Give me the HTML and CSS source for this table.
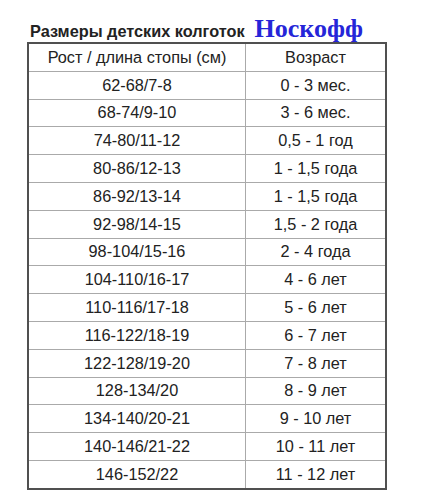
FILE: index.html
```html
<!DOCTYPE html>
<html lang="ru">
<head>
<meta charset="utf-8">
<link rel="stylesheet" href="styles.css">
</head>
<body>
<div class="page">
  <div class="title">
    <span class="caption">Размеры детских колготок</span>
    <span class="brand">Носкофф</span>
  </div>
  <table class="sizes">
    <thead>
      <tr><th class="c1">Рост / длина стопы (см)</th><th class="c2">Возраст</th></tr>
    </thead>
    <tbody>
      <tr><td>62-68/7-8</td><td>0 - 3 мес.</td></tr>
      <tr><td>68-74/9-10</td><td>3 - 6 мес.</td></tr>
      <tr><td>74-80/11-12</td><td>0,5 - 1 год</td></tr>
      <tr><td>80-86/12-13</td><td>1 - 1,5 года</td></tr>
      <tr><td>86-92/13-14</td><td>1 - 1,5 года</td></tr>
      <tr><td>92-98/14-15</td><td>1,5 - 2 года</td></tr>
      <tr><td>98-104/15-16</td><td>2 - 4 года</td></tr>
      <tr><td>104-110/16-17</td><td>4 - 6 лет</td></tr>
      <tr><td>110-116/17-18</td><td>5 - 6 лет</td></tr>
      <tr><td>116-122/18-19</td><td>6 - 7 лет</td></tr>
      <tr><td>122-128/19-20</td><td>7 - 8 лет</td></tr>
      <tr><td>128-134/20</td><td>8 - 9 лет</td></tr>
      <tr><td>134-140/20-21</td><td>9 - 10 лет</td></tr>
      <tr><td>140-146/21-22</td><td>10 - 11 лет</td></tr>
      <tr><td>146-152/22</td><td>11 - 12 лет</td></tr>
    </tbody>
  </table>
</div>
</body>
</html>
```
FILE: styles.css
```css
html, body {
  margin: 0;
  padding: 0;
  background: #fff;
}
.page {
  padding: 14px 0 0 27px;
  font-family: "Liberation Sans", Arial, sans-serif;
  color: #222;
}
.title {
  display: flex;
  align-items: baseline;
  gap: 10px;
  padding-left: 3px;
  height: 28px;
}
.caption {
  font-weight: bold;
  font-size: 16.3px;
  color: #222;
}
.brand {
  font-family: "Liberation Serif", "Times New Roman", serif;
  font-weight: bold;
  font-size: 26px;
  color: #2525d8;
}
.sizes {
  border-collapse: collapse;
  border: 2px solid #505050;
  width: 360px;
  font-size: 16.3px;
}
.sizes th, .sizes td {
  border: 1px solid #aaa;
  height: 26.8px;
  padding: 0;
  text-align: center;
  font-weight: normal;
  color: #222;
}
.sizes .c1 { width: 216px; }
```
